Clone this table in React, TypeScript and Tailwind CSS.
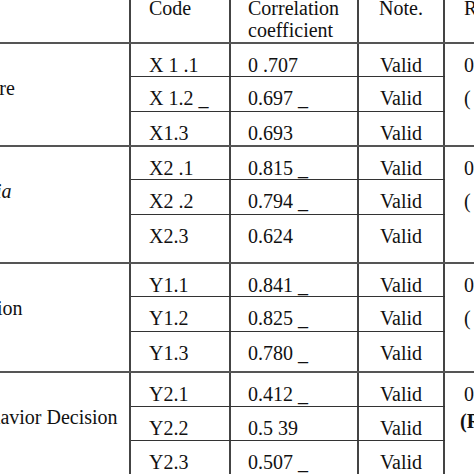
import React from "react";

type Group = {
  label: React.ReactNode;
  rows: [string, string][];
  heights: number[];
  rel: [string, string];
  bold: boolean;
  relGap: string;
  last?: boolean;
};

const groups: Group[] = [
  {
    label: <>Islamic Culture</>,
    rows: [
      ["X 1 .1", "0 .707"],
      ["X 1.2 _", "0.697 _"],
      ["X1.3", "0.693"],
    ],
    heights: [33, 35, 33],
    rel: ["0.781", "( Reliable)"],
    bold: false,
    relGap: "mt-[11px]",
  },
  {
    label: (
      <>
        Muslim <i>Sharia</i>
      </>
    ),
    rows: [
      ["X2 .1", "0.815 _"],
      ["X2 .2", "0.794 _"],
      ["X2.3", "0.624"],
    ],
    heights: [33, 35, 47],
    rel: ["0.734", "( Reliable)"],
    bold: false,
    relGap: "mt-[11px]",
  },
  {
    label: <>Price Perception</>,
    rows: [
      ["Y1.1", "0.841 _"],
      ["Y1.2", "0.825 _"],
      ["Y1.3", "0.780 _"],
    ],
    heights: [33, 35, 39],
    rel: ["0.746", "( Reliable)"],
    bold: false,
    relGap: "mt-[11px]",
  },
  {
    label: <>Purchase Behavior Decision</>,
    rows: [
      ["Y2.1", "0.412 _"],
      ["Y2.2", "0.5 39"],
      ["Y2.3", "0.507 _"],
    ],
    heights: [34, 34, 40],
    rel: ["0.612", "(Reliable)"],
    bold: true,
    relGap: "mt-[5px]",
    last: true,
  },
];

const heightClass: Record<number, string> = {
  33: "h-[33px]",
  34: "h-[34px]",
  35: "h-[35px]",
  39: "h-[39px]",
  40: "h-[40px]",
  47: "h-[47px]",
};

export default function App() {
  return (
    <div className="w-[474px] h-[474px] overflow-hidden bg-white">
      <div
        className="ml-[-117px] mt-[-13px] w-[762px] text-[20px] leading-[22px] text-[#111]"
        style={{ fontFamily: '"Liberation Serif", "Times New Roman", serif' }}
      >
        {/* Header */}
        <div className="flex h-[57px] border-b-2 border-[#555]">
          <div className="w-[248px] shrink-0 border-r-2 border-[#444]" />
          <div className="w-[100px] shrink-0 border-r-2 border-[#444] pt-[10px] pl-[18px]">
            Code
          </div>
          <div className="w-[128px] shrink-0 border-r-2 border-[#444] pt-[10px] pl-[17px]">
            Correlation coefficient
          </div>
          <div className="w-[86px] shrink-0 border-r-2 border-[#444] pt-[10px] text-center">
            Note.
          </div>
          <div className="flex-1 pt-[10px] pl-[19px] whitespace-nowrap">Reliability</div>
        </div>

        {groups.map((g, gi) => (
          <div
            key={gi}
            className={g.last ? "flex" : "flex border-b-2 border-[#555]"}
          >
            <div className="w-[248px] shrink-0 border-r-2 border-[#444] pl-[8px] pt-[33px] whitespace-nowrap">
              {g.label}
            </div>
            <div className="flex flex-col shrink-0">
              {g.rows.map((r, ri) => (
                <div
                  key={ri}
                  className={
                    (ri < g.rows.length - 1 ? "border-b border-[#333] " : "") +
                    "flex " +
                    heightClass[g.heights[ri]]
                  }
                >
                  <div className="w-[100px] shrink-0 border-r-2 border-[#444] pt-[10px] pl-[18px] whitespace-nowrap">
                    {r[0]}
                  </div>
                  <div className="w-[128px] shrink-0 border-r-2 border-[#444] pt-[10px] pl-[17px] whitespace-nowrap">
                    {r[1]}
                  </div>
                  <div className="w-[86px] shrink-0 border-r-2 border-[#444] pt-[10px] text-center">
                    Valid
                  </div>
                </div>
              ))}
            </div>
            <div className="flex-1 flex flex-col pt-[10px] pl-[19px] whitespace-pre">
              <div>{g.rel[0]}</div>
              <div className={g.relGap + (g.bold ? " font-bold ml-[-4px]" : "")}>
                {g.rel[1]}
              </div>
            </div>
          </div>
        ))}
      </div>
    </div>
  );
}
